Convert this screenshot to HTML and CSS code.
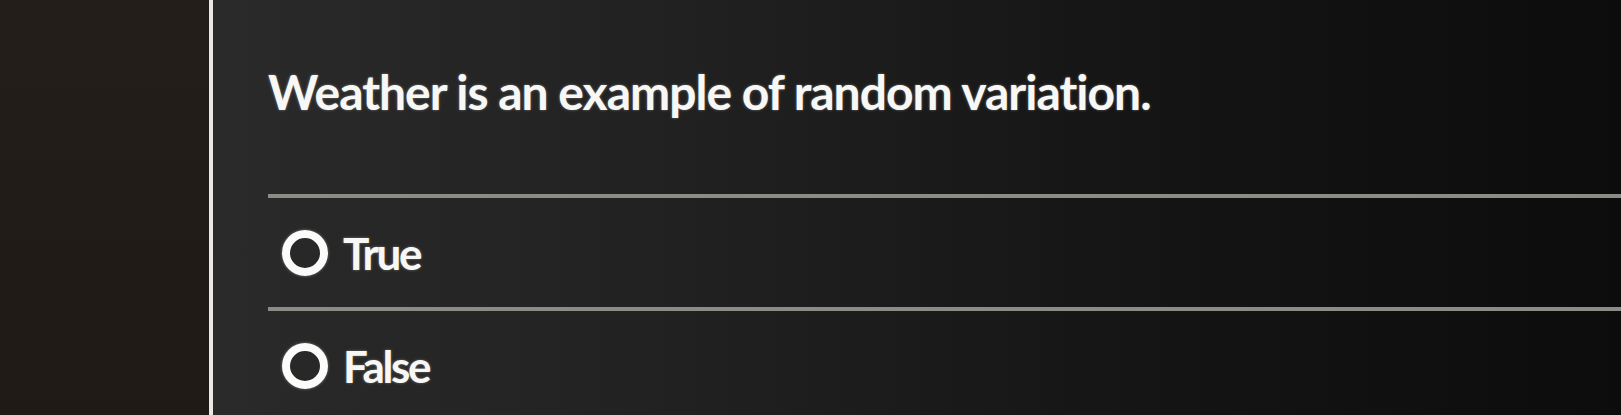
FILE: index.html
```html
<!DOCTYPE html>
<html lang="en">
<head>
  <meta charset="UTF-8">
  <meta name="viewport" content="width=device-width, initial-scale=1.0">
  <title>Quiz Question</title>
  <link rel="stylesheet" href="styles.css">
</head>
<body>
  <div class="screen">
    <aside class="sidebar"></aside>
    <main class="question">
      <h1 class="question-text">Weather is an example of random variation.</h1>
      <ul class="answers">
        <li class="answer">
          <span class="radio"></span>
          <span class="answer-label">True</span>
        </li>
        <li class="answer">
          <span class="radio"></span>
          <span class="answer-label">False</span>
        </li>
      </ul>
    </main>
  </div>
</body>
</html>
```

FILE: styles.css
```css
body {
  margin: 0;
  height: 100vh;
  overflow: hidden;
  background: #1f1a17;
  font-family: 'Lato', 'Noto Sans', sans-serif;
  color: #f7f7f5;
}

.screen {
  display: flex;
  height: 100%;
}

.sidebar {
  width: 209px;
  flex-shrink: 0;
  background: linear-gradient(180deg, #241e1a, #201a16);
  border-right: 4px solid #e9e8e2;
}

.question {
  flex: 1;
  padding-left: 55px;
  background: linear-gradient(90deg, #2a2a2a 0%, #222 30%, #151515 65%, #0c0c0c 100%);
}

.question-text {
  margin: 0;
  padding-top: 62px;
  height: 194px;
  box-sizing: border-box;
  font-size: 48px;
  font-weight: 700;
  line-height: 60px;
  letter-spacing: -1px;
  text-shadow: 0 0 3px rgba(255, 255, 255, 0.35);
}

.answers {
  list-style: none;
  margin: 0;
  padding: 0;
}

/* each option: rule on top, radio + label below */
.answer {
  display: flex;
  align-items: center;
  gap: 15px;
  padding: 32px 0 31px 14px;
  border-top: 4px solid #8c8b85;
}

.radio {
  width: 30px;
  height: 30px;
  border: 8px solid #fbfbf9;
  border-radius: 50%;
  box-shadow: 0 0 3px rgba(255, 255, 255, 0.4);
}

.answer-label {
  font-size: 44px;
  line-height: 46px;
  font-weight: 700;
  letter-spacing: -2.4px;
  text-shadow: 0 0 3px rgba(255, 255, 255, 0.35);
}
```
